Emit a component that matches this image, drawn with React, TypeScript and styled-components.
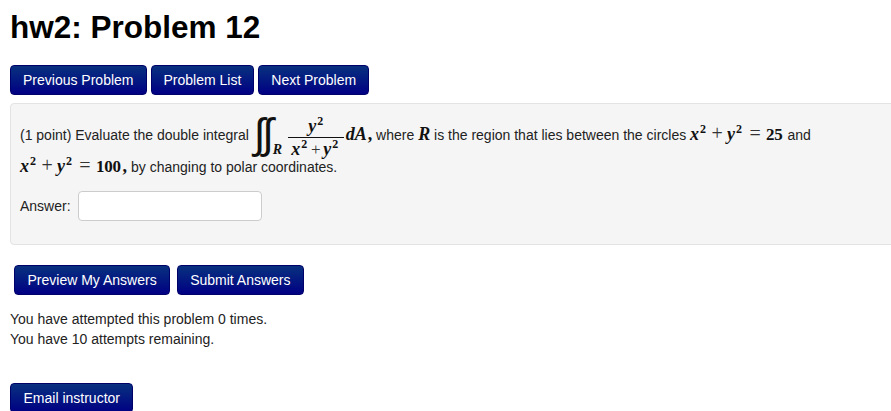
import styled, { createGlobalStyle } from "styled-components";

const GlobalStyle = createGlobalStyle`
  html, body {
    margin: 0;
    padding: 0;
    background: #fff;
    overflow: hidden;
  }
  body {
    width: 891px;
    height: 411px;
    font-family: "Liberation Sans", Arial, sans-serif;
    font-size: 14px;
    line-height: 20px;
    color: #222;
  }
`;

const Page = styled.div`
  padding: 0 0 0 10px;
  display: flex;
  flex-direction: column;
  align-items: flex-start;
`;

const Title = styled.h1`
  margin: 7px 0 0;
  font-size: 31.5px;
  line-height: 40px;
  font-weight: bold;
  color: #000;
`;

const ButtonRow = styled.div<{ $gap: number; $indent?: number }>`
  display: flex;
  gap: ${(p) => p.$gap}px;
  margin-left: ${(p) => p.$indent ?? 0}px;
`;

const NavRow = styled(ButtonRow)`
  margin-top: 18px;
`;

const SubmitRow = styled(ButtonRow)`
  margin-top: 20px;
`;

const Button = styled.button<{ $pad?: number }>`
  height: 30px;
  padding: 0 ${(p) => p.$pad ?? 12}px;
  border: 1px solid #00006a;
  border-radius: 4px;
  background: linear-gradient(to bottom, #08317f, #000083);
  color: #fff;
  font-family: inherit;
  font-size: 14px;
  line-height: 20px;
  white-space: nowrap;
`;

const EmailButton = styled(Button)`
  margin-top: 34px;
`;

const Well = styled.div`
  margin-top: 8px;
  width: 900px;
  height: 142px;
  box-sizing: border-box;
  padding: 0 9px;
  background: #f5f5f5;
  border: 1px solid #e3e3e3;
  border-radius: 4px;
`;

const FirstLine = styled.div`
  margin-top: 8px;
  height: 42px;
  line-height: 42px;
  white-space: pre;
`;

const SecondLine = styled.div`
  height: 24px;
  line-height: 24px;
  white-space: pre;
`;

const Formula = styled.span`
  font-family: "Liberation Serif", "Times New Roman", serif;
  font-size: 18px;
  color: #111;
`;

const Var = styled.i`
  font-weight: bold;
`;

const Num = styled.b`
  font-weight: bold;
  font-size: 17px;
  letter-spacing: -0.3px;
  margin-right: 1px;
`;

const Comma = styled.b`
  font-weight: bold;
  margin-left: 1px;
`;

const SquareBox = styled.span`
  display: inline-block;
  width: 17px;
  line-height: 20px;
`;

const Sup = styled.sup`
  font-size: 12px;
  line-height: 0;
  font-weight: bold;
  vertical-align: 7px;
  margin-left: 1px;
`;

const Op = styled.span<{ $width: number }>`
  display: inline-block;
  width: ${(p) => p.$width}px;
  margin: 0 4.5px;
  text-align: center;
  font-size: 20px;
  line-height: 20px;
  color: #333;
`;

const Integral = styled.span`
  display: inline-flex;
  align-items: flex-end;
  vertical-align: middle;
  width: 29px;
  height: 42px;
  margin: 0 4px 0 1px;
`;

const IntegralSign = styled.span`
  width: 8.5px;
  font-family: "DejaVu Sans", sans-serif;
  font-size: 42px;
  font-weight: 300;
  line-height: 46px;
`;

const Sub = styled.i`
  font-size: 14px;
  font-weight: bold;
  line-height: 14px;
  margin-left: 2px;
`;

const Fraction = styled.span`
  display: inline-flex;
  flex-direction: column;
  align-items: center;
  vertical-align: middle;
  width: 56px;
  margin: 2px 2px 0 1px;
`;

const Numerator = styled.span`
  align-self: stretch;
  height: 23px;
  line-height: 24px;
  border-bottom: 1px solid #111;
  text-align: center;
`;

const Denominator = styled.span`
  height: 21px;
  line-height: 22px;
  white-space: nowrap;
`;

const SmallOp = styled(Op)`
  margin: 0 2px;
  font-size: 17px;
`;

const AnswerRow = styled.div`
  display: flex;
  align-items: center;
  gap: 7px;
  margin-top: 13px;
`;

const AnswerInput = styled.input`
  width: 184px;
  height: 30px;
  box-sizing: border-box;
  background: #fff;
  border: 1px solid #ccc;
  border-radius: 4px;
`;

const Attempts = styled.p`
  margin: 14px 0 0;
`;

function Square({ name }: { name: string }) {
  return (
    <SquareBox>
      <Var>{name}</Var>
      <Sup>2</Sup>
    </SquareBox>
  );
}

function CircleEquation({ value }: { value: number }) {
  return (
    <>
      <Square name="x" />
      <Op $width={11}>+</Op>
      <Square name="y" />
      <Op $width={13}>=</Op>
      <Num>{value}</Num>
    </>
  );
}

export default function App() {
  return (
    <>
      <GlobalStyle />
      <Page>
        <Title>hw2: Problem 12</Title>
        <NavRow $gap={4}>
          <Button>Previous Problem</Button>
          <Button>Problem List</Button>
          <Button>Next Problem</Button>
        </NavRow>
        <Well>
          <FirstLine>
            (1 point) Evaluate the double integral{" "}
            <Formula>
              <Integral>
                <IntegralSign>∫</IntegralSign>
                <IntegralSign>∫</IntegralSign>
                <Sub>R</Sub>
              </Integral>
              <Fraction>
                <Numerator>
                  <Square name="y" />
                </Numerator>
                <Denominator>
                  <Square name="x" />
                  <SmallOp $width={11}>+</SmallOp>
                  <Square name="y" />
                </Denominator>
              </Fraction>
              <Var>dA</Var>
              <Comma>,</Comma>
            </Formula>
            {" where "}
            <Formula>
              <Var>R</Var>
            </Formula>
            {" is the region that lies between the circles "}
            <Formula>
              <CircleEquation value={25} />
            </Formula>
            {" and"}
          </FirstLine>
          <SecondLine>
            <Formula>
              <CircleEquation value={100} />
              <Comma>,</Comma>
            </Formula>
            {" by changing to polar coordinates."}
          </SecondLine>
          <AnswerRow>
            <span>Answer:</span>
            <AnswerInput />
          </AnswerRow>
        </Well>
        <SubmitRow $gap={7} $indent={4}>
          <Button $pad={12.5}>Preview My Answers</Button>
          <Button>Submit Answers</Button>
        </SubmitRow>
        <Attempts>
          You have attempted this problem 0 times.
          <br />
          You have 10 attempts remaining.
        </Attempts>
        <EmailButton $pad={12.5}>Email instructor</EmailButton>
      </Page>
    </>
  );
}
